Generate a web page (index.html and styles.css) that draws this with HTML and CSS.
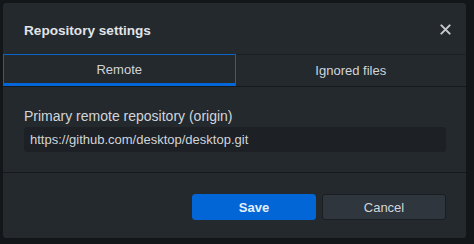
FILE: index.html
```html
<!DOCTYPE html>
<html lang="en">
<head>
  <meta charset="UTF-8">
  <meta name="viewport" content="width=device-width, initial-scale=1.0">
  <title>Repository settings</title>
  <link rel="stylesheet" href="styles.css">
</head>
<body>
  <div class="dialog">
    <div class="dialog-header">
      <h1>Repository settings</h1>
      <button class="close-btn" aria-label="Close">
        <svg width="11" height="11" viewBox="0 0 12 12">
          <path d="M1.5 1.5 L10.5 10.5 M10.5 1.5 L1.5 10.5" stroke="currentColor" stroke-width="2.2" stroke-linecap="round" />
        </svg>
      </button>
    </div>
    <div class="tab-bar">
      <div class="tab selected">Remote</div>
      <div class="tab">Ignored files</div>
    </div>
    <div class="dialog-content">
      <label for="remote">Primary remote repository (origin)</label>
      <input type="text" id="remote" value="https://github.com/desktop/desktop.git" />
    </div>
    <div class="dialog-footer">
      <button class="btn btn-primary">Save</button>
      <button class="btn">Cancel</button>
    </div>
  </div>
</body>
</html>
```

FILE: styles.css
```css
body {
  margin: 0;
  padding: 3px 8px 6px 3px;
  background-color: #131619;
  font-family: "Liberation Sans", Arial, sans-serif;
  font-size: 13px;
  color: #d1d5da;
}
.dialog {
  width: 463px;
  height: 235px;
  background: #24292e;
  border-radius: 3px;
  display: flex;
  flex-direction: column;
}
.dialog-header {
  height: 51px;
  display: flex;
  align-items: center;
  justify-content: space-between;
  padding: 0 11px 0 21px;
}
.dialog-header h1 {
  margin: 0;
  font-size: 13.6px;
  font-weight: bold;
  color: #e1e4e8;
  padding-top: 4px;
}
.close-btn {
  background: none;
  border: none;
  color: #c6cace;
  padding: 4px;
  display: flex;
  margin-top: 2px;
  cursor: pointer;
}
.tab-bar {
  display: flex;
  height: 32px;
  border-bottom: 1px solid #16191c;
}
.tab {
  flex: 1;
  display: flex;
  align-items: center;
  justify-content: center;
  color: #d1d5da;
  border-top: 1px solid #1c2024;
  box-sizing: border-box;
}
.tab.selected {
  border: 1px solid #0a63c9;
  border-bottom: 3px solid #0366d6;
}
.dialog-content {
  padding: 21px 20px 20px 21px;
  display: flex;
  flex-direction: column;
  border-bottom: 1px solid #16191c;
}
.dialog-content label {
  margin-bottom: 3px;
  font-size: 14px;
  color: #d1d5da;
}
.dialog-content input {
  height: 25px;
  box-sizing: border-box;
  background: #1d2125;
  border: 1px solid #1d2125;
  border-radius: 3px;
  padding: 0 5px;
  font-family: inherit;
  font-size: 13px;
  color: #d1d5da;
}
.dialog-footer {
  display: flex;
  justify-content: flex-end;
  gap: 6px;
  padding: 21px 20px 0 0;
}
.btn {
  width: 124px;
  height: 26px;
  border: 1px solid #1a1e22;
  border-radius: 3px;
  background: #2f363d;
  color: #d1d5da;
  font-family: inherit;
  font-size: 13px;
}
.btn-primary {
  background: #0366d6;
  border-color: #0366d6;
  color: #e6f0fb;
  font-weight: bold;
}
```
